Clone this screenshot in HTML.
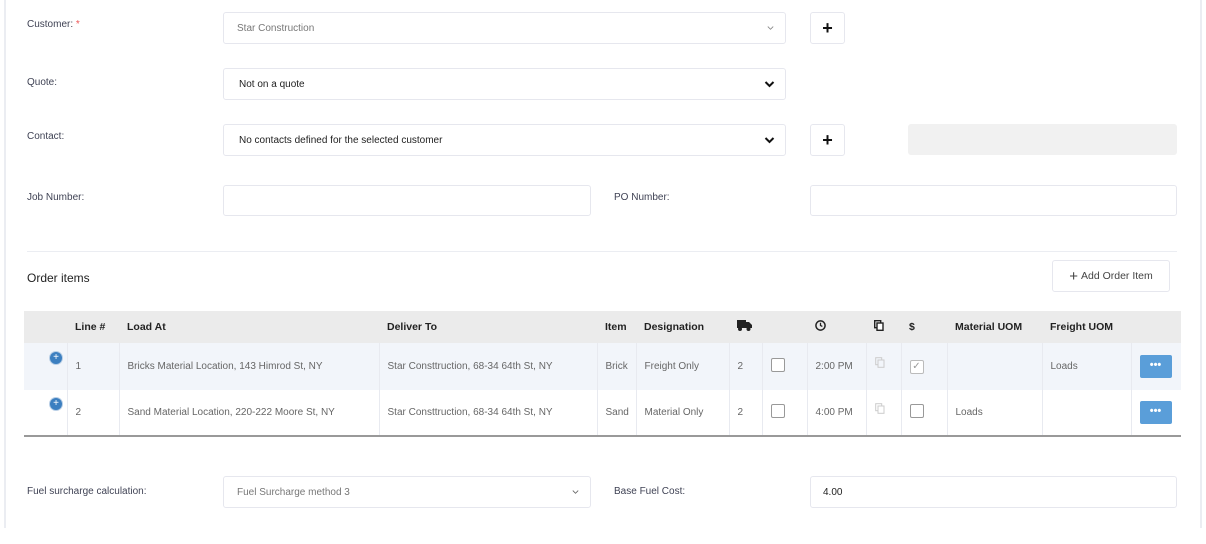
<!DOCTYPE html><html><head><style>
*{box-sizing:border-box;margin:0;padding:0}
body{width:1206px;height:544px;background:#fff;font-family:"Liberation Sans",sans-serif;position:relative;overflow:hidden;color:#333}
.a{position:absolute}
.card{left:4px;top:0;width:1198px;height:528px;border-left:2px solid #ebedf2;border-right:2px solid #ebedf2}
.lbl{font-size:10px;color:#3f4254}
.in{border:1px solid #e6e7ee;border-radius:3px;background:#fff;font-size:10px;padding-left:13px;display:flex;align-items:center}
.pb{width:35px;height:32px;border:1px solid #e6e7ee;border-radius:3px;display:flex;align-items:center;justify-content:center;font-size:18px;font-weight:bold;color:#111}
.car{position:absolute;right:10px;top:50%;margin-top:-5px}
table{border-collapse:collapse;font-size:10px;position:absolute;left:24px;top:311px;width:1157px;table-layout:fixed}
th{background:#ebebeb;height:32px;text-align:left;font-weight:bold;color:#222;padding-left:8px;font-size:10.5px}
td{height:47px;padding-left:8px;color:#666;border-left:1px solid #e8eaf0}
td:first-child{border-left:none}
tr.r1 td{background:#f2f5fa}
tr.r2 td{height:46px;border-bottom:2px solid #999}
.cb{display:inline-block;width:14px;height:14px;border:1px solid #999;border-radius:2px;background:#fff}
.dots{display:inline-block;width:32px;height:23px;background:#5a9ed9;border-radius:2px;color:#fff;text-align:center;line-height:20px;font-weight:bold;font-size:11px}
.pl{display:inline-block;width:12px;height:12px;border-radius:50%;background:#3c7fc0;color:#fff;font-size:10px;line-height:11px;text-align:center;position:relative;top:-9px;left:26px;box-shadow:0 0 0 1px #b9cfe6}
</style></head><body>
<div class="a card"></div>
<div class="a lbl" style="left:27px;top:19px">Customer: <span style="color:#e55">*</span></div>
<div class="a in" style="left:223px;top:12px;width:563px;height:32px;color:#777">Star Construction<svg class="car" width="9" height="9" viewBox="0 0 10 10"><path d="M2 4l3 3 3-3" stroke="#888" fill="none"/></svg></div>
<div class="a pb" style="left:810px;top:12px">+</div>
<div class="a lbl" style="left:27px;top:77px">Quote:</div>
<div class="a in" style="left:223px;top:68px;width:563px;height:32px;color:#222;padding-left:15px">Not on a quote<svg class="car" width="11" height="10" viewBox="0 0 10 10"><path d="M1 3l4 4 4-4" stroke="#111" stroke-width="2" fill="none"/></svg></div>
<div class="a lbl" style="left:27px;top:131px">Contact:</div>
<div class="a in" style="left:223px;top:124px;width:563px;height:32px;color:#222;padding-left:15px">No contacts defined for the selected customer<svg class="car" width="11" height="10" viewBox="0 0 10 10"><path d="M1 3l4 4 4-4" stroke="#111" stroke-width="2" fill="none"/></svg></div>
<div class="a pb" style="left:810px;top:124px">+</div>
<div class="a" style="left:908px;top:124px;width:269px;height:31px;background:#f1f1f1;border-radius:3px"></div>
<div class="a lbl" style="left:27px;top:192px">Job Number:</div>
<div class="a in" style="left:223px;top:185px;width:368px;height:31px"></div>
<div class="a lbl" style="left:614px;top:192px">PO Number:</div>
<div class="a in" style="left:810px;top:185px;width:367px;height:31px"></div>
<div class="a" style="left:27px;top:251px;width:1150px;height:1px;background:#ebedf2"></div>
<div class="a" style="left:27px;top:271px;font-size:12px;color:#222">Order items</div>
<div class="a" style="left:1052px;top:260px;width:118px;height:32px;border:1px solid #e6e7ee;border-radius:3px;font-size:10.5px;color:#444;display:flex;align-items:center;justify-content:center"><span style="font-size:15px;margin-right:3px">+</span>Add Order Item</div>
<table>
<colgroup><col style="width:43px"><col style="width:52px"><col style="width:260px"><col style="width:218px"><col style="width:39px"><col style="width:93px"><col style="width:33px"><col style="width:45px"><col style="width:59px"><col style="width:35px"><col style="width:46px"><col style="width:95px"><col style="width:89px"><col style="width:50px"></colgroup>
<tr><th></th><th>Line #</th><th>Load At</th><th>Deliver To</th><th>Item</th><th>Designation</th><th><svg width="15" height="11" viewBox="0 0 15 11"><rect x="0" y="0" width="9" height="8" fill="#222"/><path d="M9 2h3l3 3v3H9z" fill="#222"/><circle cx="3" cy="9" r="2" fill="#222"/><circle cx="11.5" cy="9" r="2" fill="#222"/></svg></th><th></th><th><svg width="11" height="11" viewBox="0 0 12 12"><circle cx="6" cy="6" r="5" stroke="#222" stroke-width="1.6" fill="none"/><path d="M6 3v3l2 1" stroke="#222" stroke-width="1.4" fill="none"/></svg></th><th><svg width="10" height="11" viewBox="0 0 10 11"><rect x="0.7" y="0.7" width="6" height="7" stroke="#222" fill="none" stroke-width="1.4"/><rect x="3" y="3" width="6" height="7.3" stroke="#222" fill="#fff" stroke-width="1.4"/></svg></th><th>$</th><th>Material UOM</th><th>Freight UOM</th><th></th></tr>
<tr class="r1"><td style="padding:0"><span class="pl">+</span></td><td>1</td><td>Bricks Material Location, 143 Himrod St, NY</td><td>Star Consttruction, 68-34 64th St, NY</td><td>Brick</td><td>Freight Only</td><td>2</td><td><span class="cb"></span></td><td>2:00 PM</td><td><svg width="10" height="11" viewBox="0 0 10 11" style="position:relative;top:-3px"><rect x="0.7" y="0.7" width="6" height="7" stroke="#ccc" fill="none"/><rect x="3" y="3" width="6" height="7.3" stroke="#ccc" fill="#f2f5fa"/></svg></td><td><span class="cb" style="border-color:#bbb;font-size:10px;line-height:12px;text-align:center;color:#999">✓</span></td><td></td><td>Loads</td><td><span class="dots">•••</span></td></tr>
<tr class="r2"><td style="padding:0"><span class="pl">+</span></td><td>2</td><td>Sand Material Location, 220-222 Moore St, NY</td><td>Star Consttruction, 68-34 64th St, NY</td><td>Sand</td><td>Material Only</td><td>2</td><td><span class="cb"></span></td><td>4:00 PM</td><td><svg width="10" height="11" viewBox="0 0 10 11" style="position:relative;top:-3px"><rect x="0.7" y="0.7" width="6" height="7" stroke="#ccc" fill="none"/><rect x="3" y="3" width="6" height="7.3" stroke="#ccc" fill="#fff"/></svg></td><td><span class="cb"></span></td><td>Loads</td><td></td><td><span class="dots">•••</span></td></tr>
</table>
<div class="a lbl" style="left:27px;top:486px">Fuel surcharge calculation:</div>
<div class="a in" style="left:223px;top:476px;width:368px;height:32px;color:#777">Fuel Surcharge method 3<svg class="car" width="9" height="9" viewBox="0 0 10 10"><path d="M2 4l3 3 3-3" stroke="#666" fill="none"/></svg></div>
<div class="a lbl" style="left:614px;top:486px">Base Fuel Cost:</div>
<div class="a in" style="left:810px;top:476px;width:367px;height:32px;color:#222;padding-left:12px">4.00</div>
</body></html>
